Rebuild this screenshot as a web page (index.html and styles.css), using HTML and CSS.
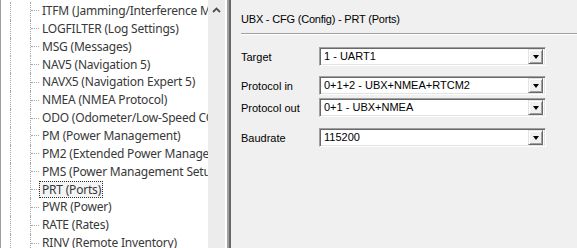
FILE: index.html
```html
<!DOCTYPE html>
<html>
<head>
<meta charset="utf-8">
<link rel="stylesheet" href="styles.css">
</head>
<body>
<div class="app">
  <div class="tree-wrap">
    <div class="tree">
      <div class="item"><span class="g1"></span><span class="g2"></span><span class="br"></span><span class="label">ITFM (Jamming/Interference Monitor)</span></div>
      <div class="item"><span class="g1"></span><span class="g2"></span><span class="br"></span><span class="label">LOGFILTER (Log Settings)</span></div>
      <div class="item"><span class="g1"></span><span class="g2"></span><span class="br"></span><span class="label">MSG (Messages)</span></div>
      <div class="item"><span class="g1"></span><span class="g2"></span><span class="br"></span><span class="label">NAV5 (Navigation 5)</span></div>
      <div class="item"><span class="g1"></span><span class="g2"></span><span class="br"></span><span class="label">NAVX5 (Navigation Expert 5)</span></div>
      <div class="item"><span class="g1"></span><span class="g2"></span><span class="br"></span><span class="label">NMEA (NMEA Protocol)</span></div>
      <div class="item"><span class="g1"></span><span class="g2"></span><span class="br"></span><span class="label">ODO (Odometer/Low-Speed COG Filter)</span></div>
      <div class="item"><span class="g1"></span><span class="g2"></span><span class="br"></span><span class="label">PM (Power Management)</span></div>
      <div class="item"><span class="g1"></span><span class="g2"></span><span class="br"></span><span class="label">PM2 (Extended Power Management)</span></div>
      <div class="item"><span class="g1"></span><span class="g2"></span><span class="br"></span><span class="label">PMS (Power Management Setup)</span></div>
      <div class="item"><span class="g1"></span><span class="g2"></span><span class="br"></span><span class="label selected">PRT (Ports)</span></div>
      <div class="item"><span class="g1"></span><span class="g2"></span><span class="br"></span><span class="label">PWR (Power)</span></div>
      <div class="item"><span class="g1"></span><span class="g2"></span><span class="br"></span><span class="label">RATE (Rates)</span></div>
      <div class="item"><span class="g1"></span><span class="g2"></span><span class="br"></span><span class="label">RINV (Remote Inventory)</span></div>
    </div>
    <div class="scrollbar">
      <svg class="up" width="9" height="6" viewBox="0 0 9 6"><path d="M1 5 L4.5 1.5 L8 5" fill="none" stroke="#505050" stroke-width="1.8"/></svg>
    </div>
  </div>
  <div class="panel">
    <div class="title">UBX - CFG (Config) - PRT (Ports)</div>
    <div class="sep"></div>
    <div class="form">
      <div class="row r-target"><span class="lbl">Target</span><div class="combo"><span class="val">1 - UART1</span><span class="btn"><span class="arrow"></span></span></div></div>
      <div class="row r-in"><span class="lbl">Protocol in</span><div class="combo"><span class="val">0+1+2 - UBX+NMEA+RTCM2</span><span class="btn"><span class="arrow"></span></span></div></div>
      <div class="row r-out"><span class="lbl">Protocol out</span><div class="combo"><span class="val">0+1 - UBX+NMEA</span><span class="btn"><span class="arrow"></span></span></div></div>
      <div class="row r-baud"><span class="lbl">Baudrate</span><div class="combo"><span class="val">115200</span><span class="btn"><span class="arrow"></span></span></div></div>
    </div>
  </div>
</div>
</body>
</html>
```

FILE: styles.css
```css
html, body {
  margin: 0;
  padding: 0;
  background: #f0f0f0;
}
.app {
  display: flex;
  width: 577px;
  height: 248px;
  overflow: hidden;
}
.tree-wrap {
  display: flex;
  flex: none;
  border-left: 1px solid #a0a0a0;
  border-right: 2px solid #ffffff;
  height: 248px;
}
.tree {
  width: 207px;
  background: #ffffff;
  padding-top: 2px;
  overflow: hidden;
  font-family: "Noto Sans", "Open Sans", sans-serif;
  font-size: 12px;
  letter-spacing: -0.2px;
  color: #383838;
}
.item {
  display: flex;
  align-items: stretch;
  height: 17.87px;
  white-space: nowrap;
}
.g1 {
  flex: none;
  width: 9px;
  border-right: 1px dotted #a8a8a8;
}
.g2 {
  flex: none;
  width: 19px;
  border-right: 1px dotted #a8a8a8;
}
.br {
  flex: none;
  width: 8px;
  align-self: center;
  border-top: 1px dotted #a8a8a8;
  height: 0;
}
.label {
  display: flex;
  align-items: center;
  padding: 0 1px 0 2px;
  border: 1px solid transparent;
  line-height: 16px;
}
.label.selected {
  border: 1px dotted #303030;
  background: #f4f4f4;
}
.scrollbar {
  width: 17px;
  background: #ececec;
  position: relative;
}
.up {
  position: absolute;
  left: 4px;
  top: 7px;
}
.panel {
  flex: 1;
  border-left: 2px solid #a0a0a0;
  box-shadow: inset 2px 0 0 #696969;
  padding-left: 12px;
  font-family: "Liberation Sans", Arial, sans-serif;
  font-size: 11px;
  color: #000;
}
.title {
  padding-top: 13px;
  height: 13px;
  line-height: 13px;
  letter-spacing: -0.2px;
}
.sep {
  margin-top: 7px;
  height: 0;
  border-top: 1px solid #a0a0a0;
  border-bottom: 1px solid #ffffff;
}
.form {
  display: flex;
  flex-direction: column;
}
.row {
  display: flex;
  align-items: center;
}
.r-target { margin-top: 12px; }
.r-in { margin-top: 10px; }
.r-out { margin-top: 3px; }
.r-baud { margin-top: 11px; }
.lbl {
  width: 78px;
  flex: none;
}
.combo {
  width: 227px;
  height: 19px;
  box-sizing: border-box;
  border-top: 1px solid #a0a0a0;
  border-left: 1px solid #a0a0a0;
  border-bottom: 1px solid #ffffff;
  border-right: 1px solid #ffffff;
  box-shadow: inset 1px 1px 0 #696969, inset -1px -1px 0 #e3e3e3;
  background: #ffffff;
  display: flex;
  align-items: center;
  padding: 2px 2px 2px 4px;
}
.val {
  flex: 1;
  line-height: 13px;
}
.btn {
  width: 15px;
  height: 15px;
  box-sizing: border-box;
  background: #f0f0f0;
  border-top: 1px solid #e3e3e3;
  border-left: 1px solid #e3e3e3;
  border-right: 1px solid #696969;
  border-bottom: 1px solid #696969;
  box-shadow: inset 1px 1px 0 #ffffff, inset -1px -1px 0 #a0a0a0;
  display: flex;
  align-items: center;
  justify-content: center;
}
.arrow {
  width: 0;
  height: 0;
  border-left: 3.5px solid transparent;
  border-right: 3.5px solid transparent;
  border-top: 4px solid #000;
  margin-top: 1px;
}
```
